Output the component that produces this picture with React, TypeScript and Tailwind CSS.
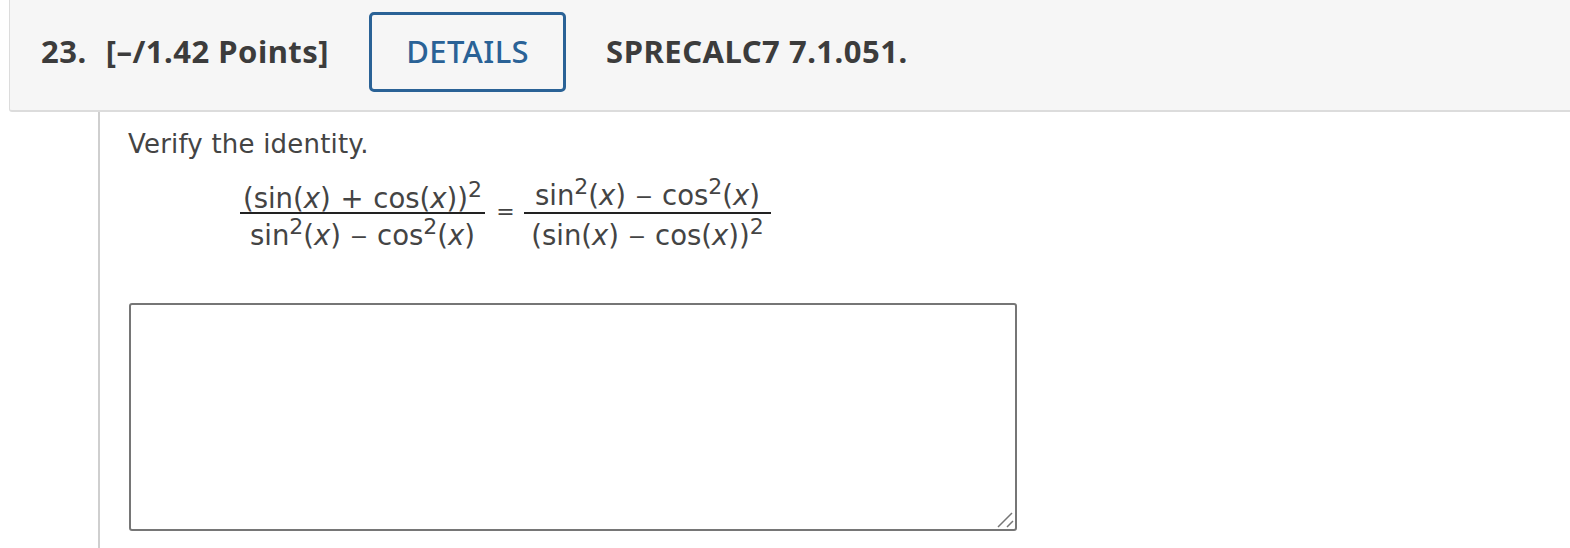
import React from "react";

const mathFont = "font-['DejaVu_Sans',sans-serif]";

const Sup: React.FC<{ children: React.ReactNode }> = ({ children }) => (
  <sup className="text-[22px] leading-none relative top-[-1px] align-super">{children}</sup>
);

const X: React.FC = () => <i className="italic">x</i>;

const Minus: React.FC = () => <span className="text-[22px] relative top-[-1px]">−</span>;

const Fraction: React.FC<{ top: React.ReactNode; bottom: React.ReactNode; width: string }> = ({ top, bottom, width }) => (
  <div className={`flex flex-col items-center ${width}`}>
    <div className="h-[41px] flex items-end whitespace-nowrap leading-[28px] border-b-2 border-[#222] w-full justify-center">{top}</div>
    <div className="h-[36px] flex items-start whitespace-nowrap leading-[28px] pt-[3px]">{bottom}</div>
  </div>
);

export default function App() {
  return (
    <div className="w-[1570px] h-[548px] overflow-hidden bg-white text-[#444] flex flex-col">
      {/* question header */}
      <div className="ml-[9px] h-[112px] shrink-0 bg-[#f6f6f6] border-b-2 border-l border-[#dcdcdc] rounded-bl-[3px] flex items-center pl-[31px] pb-[7px] font-['Noto_Sans',sans-serif] font-bold text-[31px] tracking-[0.5px] text-[#3c3c3c]">
        <span>23.</span>
        <span className="ml-[19px]">[–/1.42 Points]</span>
        <button className="ml-[40px] w-[197px] h-[80px] border-[3px] border-[#2a6296] rounded-[5px] text-[#2a6296] font-medium text-[31px] tracking-[0.4px]">DETAILS</button>
        <span className="ml-[40px]">SPRECALC7 7.1.051.</span>
      </div>

      {/* question body */}
      <div className="ml-[98px] flex-1 border-l-2 border-[#cfcfcf] pl-[28px] flex flex-col">
        <p className={`${mathFont} mt-[15px] text-[26px] tracking-[0.2px] leading-[34px] text-[#444]`}>Verify the identity.</p>
        <div className={`${mathFont} mt-[12px] ml-[112px] flex items-start text-[27.5px] text-[#444]`}>
          <Fraction
            width="w-[245px]"
            top={<span>(sin(<X />) <span className="mx-[1px]">+</span> cos(<X />))<Sup>2</Sup></span>}
            bottom={<span>sin<Sup>2</Sup>(<X />) <Minus /> cos<Sup>2</Sup>(<X />)</span>}
          />
          <span className="w-[39px] pl-[2px] text-center text-[22px] leading-[28px] mt-[25px]">=</span>
          <Fraction
            width="w-[247px]"
            top={<span>sin<Sup>2</Sup>(<X />) <Minus /> cos<Sup>2</Sup>(<X />)</span>}
            bottom={<span>(sin(<X />) <Minus /> cos(<X />))<Sup>2</Sup></span>}
          />
        </div>
        <div className="relative mt-[53px] ml-[1px] w-[888px] h-[228px] border-2 border-[#767676] rounded-[3px] bg-white">
          <svg className="absolute right-0 bottom-0" width="18" height="18" viewBox="0 0 18 18">
            <path d="M1 16 L15 2 M10 16 L16 10" stroke="#767676" strokeWidth="1.5" fill="none" />
          </svg>
        </div>
      </div>
    </div>
  );
}
